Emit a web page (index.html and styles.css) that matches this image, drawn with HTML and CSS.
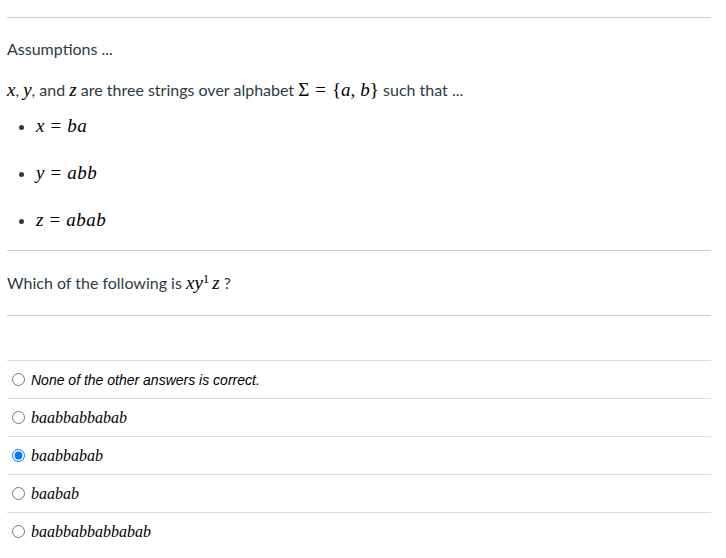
FILE: index.html
```html
<!DOCTYPE html>
<html>
<head>
<meta charset="utf-8">
<link rel="stylesheet" href="styles.css">
</head>
<body>
<div class="quiz">
  <div class="block intro">
    <p class="para first">Assumptions ...</p>
    <p class="para"><span class="m">x</span>, <span class="m">y</span>, and <span class="m">z</span> are three strings over alphabet <span class="mu">Σ</span><span class="mu eq">=</span><span class="mu">{</span><span class="m">a</span><span class="mu comma">,</span><span class="m">b</span><span class="mu">}</span> such that ...</p>
    <ul class="defs">
      <li><span class="m">x</span><span class="mu eq">=</span><span class="m wide">ba</span></li>
      <li><span class="m">y</span><span class="mu eq">=</span><span class="m wide">abb</span></li>
      <li><span class="m">z</span><span class="mu eq">=</span><span class="m wide">abab</span></li>
    </ul>
  </div>
  <div class="block ask">
    <p class="para">Which of the following is <span class="m">xy</span><sup class="sup">1</sup><span class="m">z</span> ?</p>
  </div>
  <div class="block spacer"></div>
  <div class="answers">
    <label class="answer"><input type="radio" name="a"><span class="opt">None of the other answers is correct.</span></label>
    <label class="answer"><input type="radio" name="a"><span class="m opt-m">baabbabbabab</span></label>
    <label class="answer"><input type="radio" name="a" checked><span class="m opt-m">baabbabab</span></label>
    <label class="answer"><input type="radio" name="a"><span class="m opt-m">baabab</span></label>
    <label class="answer"><input type="radio" name="a"><span class="m opt-m">baabbabbabbabab</span></label>
  </div>
</div>
</body>
</html>
```
FILE: styles.css
```css
html, body {
  margin: 0;
  padding: 0;
  background: #fff;
}
body {
  font-family: Lato, "Open Sans", sans-serif;
  font-size: 16px;
  color: #2d3b45;
}
.quiz {
  margin: 17px 15px 0 7px;
}
.block {
  border-top: 1px solid #c7cdd1;
}
.para {
  margin: 0;
  line-height: 24px;
}
.intro {
  padding-top: 19px;
  height: 233px;
  box-sizing: border-box;
}
.intro .para.first {
  margin-bottom: 17px;
}
.m {
  font-family: "Liberation Serif", "Times New Roman", serif;
  font-style: italic;
  font-size: 19px;
  color: #000;
}
.mu {
  font-family: "Liberation Serif", "Times New Roman", serif;
  font-size: 19px;
  color: #000;
}
.eq {
  margin: 0 6px;
}
.comma {
  margin-right: 5px;
}
.wide {
  letter-spacing: 0.5px;
}
.sup {
  font-family: "Liberation Serif", serif;
  font-size: 13px;
  color: #000;
  line-height: 0;
  margin-right: 3px;
}
.defs {
  margin: 12px 0 0 0;
  padding-left: 29px;
}
.defs li {
  line-height: 24px;
  margin-bottom: 23px;
}
.ask {
  padding-top: 20px;
  height: 65px;
  box-sizing: border-box;
}
.spacer {
  height: 45px;
  box-sizing: border-box;
}
.answers {
  display: flex;
  flex-direction: column;
}
.answer {
  display: flex;
  align-items: center;
  height: 38px;
  box-sizing: border-box;
  border-top: 1px solid #dcdcdc;
  gap: 6px;
}
.answer input {
  margin: 0 0 0 5px;
  width: 13px;
  height: 13px;
}
.opt {
  font-family: "Liberation Sans", Arial, sans-serif;
  font-style: italic;
  font-size: 14px;
  color: #000;
}
.m.opt-m {
  font-size: 16px;
}
```
